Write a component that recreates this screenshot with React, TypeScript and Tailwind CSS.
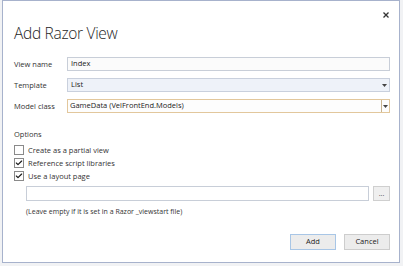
import { Check } from 'lucide-react'

const font = { fontFamily: '"Open Sans", "Noto Sans", Arial, sans-serif' }

function Arrow() {
  return (
    <svg width="5" height="3" viewBox="0 0 5 3">
      <path d="M0 0h5L2.5 3z" fill="#444" />
    </svg>
  )
}

function Checkbox({ checked, label }: { checked: boolean; label: string }) {
  return (
    <div className="flex h-[10px] items-center gap-[4px]">
      <div className="flex h-[10px] w-[10px] items-center justify-center border border-[#8a8a8a] bg-white">
        {checked && <Check size={8} strokeWidth={3.5} className="text-[#1a1a1a]" />}
      </div>
      <span className="text-[7.5px] leading-[10px] text-[#333]">{label}</span>
    </div>
  )
}

function FieldRow({ label, children }: { label: string; children: React.ReactNode }) {
  return (
    <div className="flex h-[14px] items-center">
      <span className="w-[53px] text-[7.5px] leading-[10px] text-[#333]">{label}</span>
      {children}
    </div>
  )
}

export default function App() {
  return (
    <div className="h-[266px] w-[403px] bg-[#f1f2f4] pl-[2px]" style={font}>
      <div className="flex h-[263px] w-[398px] flex-col border border-[#a7b2cc] bg-white pl-[11px] pr-[9px]">
        {/* close */}
        <div className="mt-[8px] flex h-[10px] justify-end pr-[1px]">
          <svg width="6" height="6" viewBox="0 0 6 6" className="mt-[3px]">
            <path d="M0.5 0.5l5 5M5.5 0.5l-5 5" stroke="#333" strokeWidth="1.3" />
          </svg>
        </div>

        <h1 className="mt-[4px] text-[15.5px] font-light leading-[20px] tracking-[-0.3px] text-[#1e1e1e]">Add Razor View</h1>

        <div className="mt-[14px] flex flex-col gap-[7px]">
          <FieldRow label="View name">
            <div className="flex h-[14px] flex-1 items-center border border-[#c8ced8] bg-[#fbfbfb] px-[3px] text-[7.5px] text-[#222]">
              Index
            </div>
          </FieldRow>
          <FieldRow label="Template">
            <div className="flex h-[14px] flex-1 items-center justify-between border border-[#c9d0dd] bg-[#eef2f9] pl-[3px] pr-[2px] text-[7.5px] text-[#222]">
              <span>List</span>
              <Arrow />
            </div>
          </FieldRow>
          <FieldRow label="Model class">
            <div className="flex h-[14px] flex-1 items-center justify-between border border-[#e2c79c] bg-[#fdfdfd] pl-[2px] text-[7.5px] text-[#222]">
              <span>GameData (VelFrontEnd.Models)</span>
              <div className="flex h-full w-[8px] items-center justify-center border-l border-[#c9b48f]">
                <Arrow />
              </div>
            </div>
          </FieldRow>
        </div>

        <div className="mt-[16px] text-[7.5px] leading-[10px] text-[#333]">Options</div>

        <div className="mt-[6px] flex flex-col gap-[3px]">
          <Checkbox checked={false} label="Create as a partial view" />
          <Checkbox checked label="Reference script libraries" />
          <Checkbox checked label="Use a layout page" />
        </div>

        <div className="ml-[12px] mt-[5px] flex h-[15px] gap-[4px]">
          <div className="flex-1 border border-[#c8ced8] bg-white" />
          <div className="flex w-[17px] items-end justify-center border border-[#cfcfcf] bg-[#efefef] pb-[3px] text-[7px] leading-none text-[#444]">
            ...
          </div>
        </div>

        <div className="ml-[12px] mt-[6px] text-[7px] leading-[10px] text-[#333]">
          (Leave empty if it is set in a Razor _viewstart file)
        </div>

        <div className="mt-[17px] flex justify-end gap-[8px]">
          <button className="h-[16px] w-[46px] border border-[#a8c6e6] bg-[#ececec] text-[7.5px] text-[#222]">Add</button>
          <button className="h-[16px] w-[46px] border border-[#cdcdcd] bg-[#ececec] text-[7.5px] text-[#222]">Cancel</button>
        </div>
      </div>
    </div>
  )
}
